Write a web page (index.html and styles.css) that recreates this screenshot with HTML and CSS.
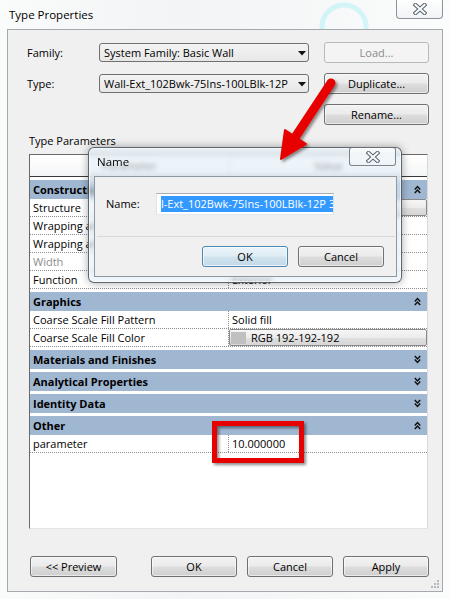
FILE: index.html
```html
<!DOCTYPE html>
<html>
<head>
<meta charset="utf-8">
<title>Type Properties</title>
<link rel="stylesheet" href="styles.css">
</head>
<body>
<svg class="defs" width="0" height="0" aria-hidden="true">
  <defs>
    <symbol id="chev-up" viewBox="0 0 7 9">
      <polyline points="0.8,4.5 3.5,1.5 6.2,4.5" fill="none" stroke="#111" stroke-width="1.5"/>
      <polyline points="0.8,8 3.5,5 6.2,8" fill="none" stroke="#111" stroke-width="1.5"/>
    </symbol>
    <symbol id="chev-down" viewBox="0 0 7 9">
      <polyline points="0.8,1 3.5,4 6.2,1" fill="none" stroke="#111" stroke-width="1.5"/>
      <polyline points="0.8,4.5 3.5,7.5 6.2,4.5" fill="none" stroke="#111" stroke-width="1.5"/>
    </symbol>
    <symbol id="close-x" viewBox="0 0 14 12">
      <path d="M2.5 2 L11.5 10 M11.5 2 L2.5 10" stroke="#5d6873" stroke-width="4.2" stroke-linecap="square" fill="none"/>
      <path d="M2.5 2 L11.5 10 M11.5 2 L2.5 10" stroke="#fbfcfd" stroke-width="2" stroke-linecap="square" fill="none"/>
    </symbol>
    <symbol id="drop" viewBox="0 0 8 5">
      <polygon points="0,0 8,0 4,4.5" fill="#111"/>
    </symbol>
  </defs>
</svg>

<div class="window">
  <div class="titlebar">
    <span class="title">Type Properties</span>
    <div class="close-btn"><svg class="x-icon" width="14" height="12"><use href="#close-x"/></svg></div>
  </div>

  <div class="client">
    <div class="form">
      <span class="lbl">Family:</span>
      <div class="combo"><span class="combo-text">System Family: Basic Wall</span><svg class="drop" width="8" height="5"><use href="#drop"/></svg></div>
      <div class="btn disabled">Load...</div>

      <span class="lbl">Type:</span>
      <div class="combo"><span class="combo-text">Wall-Ext_102Bwk-75Ins-100LBlk-12P</span><svg class="drop" width="8" height="5"><use href="#drop"/></svg></div>
      <div class="btn">Duplicate...</div>

      <div class="btn rename">Rename...</div>
    </div>

    <div class="section">Type Parameters</div>

    <div class="grid">
      <div class="hdr"><div class="hc">Parameter</div><div class="hc">Value</div></div>

      <div class="group"><span>Construction</span><svg class="chev" width="7" height="9"><use href="#chev-up"/></svg></div>
      <div class="row"><div class="c1">Structure</div><div class="c2 has-btn"><div class="cellbtn center">Edit...</div></div></div>
      <div class="row"><div class="c1">Wrapping at Inserts</div><div class="c2">Do not wrap</div></div>
      <div class="row"><div class="c1">Wrapping at Ends</div><div class="c2">None</div></div>
      <div class="row"><div class="c1 ro">Width</div><div class="c2 ro">300.0</div></div>
      <div class="row"><div class="c1">Function</div><div class="c2">Exterior</div></div>

      <div class="group"><span>Graphics</span><svg class="chev" width="7" height="9"><use href="#chev-up"/></svg></div>
      <div class="row"><div class="c1">Coarse Scale Fill Pattern</div><div class="c2">Solid fill</div></div>
      <div class="row"><div class="c1">Coarse Scale Fill Color</div><div class="c2 has-btn"><div class="cellbtn"><span class="swatch"></span><span>RGB 192-192-192</span></div></div></div>

      <div class="group"><span>Materials and Finishes</span><svg class="chev" width="7" height="9"><use href="#chev-down"/></svg></div>
      <div class="group"><span>Analytical Properties</span><svg class="chev" width="7" height="9"><use href="#chev-down"/></svg></div>
      <div class="group"><span>Identity Data</span><svg class="chev" width="7" height="9"><use href="#chev-down"/></svg></div>
      <div class="group"><span>Other</span><svg class="chev" width="7" height="9"><use href="#chev-up"/></svg></div>
      <div class="row"><div class="c1">parameter</div><div class="c2">10.000000</div></div>
    </div>

    <div class="footer">
      <div class="btn preview">&lt;&lt; Preview</div>
      <div class="btn push">OK</div>
      <div class="btn">Cancel</div>
      <div class="btn">Apply</div>
    </div>

    <svg class="grip" width="10" height="10" viewBox="0 0 10 10">
      <g fill="#b8b8b8">
        <rect x="7" y="1" width="2" height="2"/>
        <rect x="4" y="4" width="2" height="2"/><rect x="7" y="4" width="2" height="2"/>
        <rect x="1" y="7" width="2" height="2"/><rect x="4" y="7" width="2" height="2"/><rect x="7" y="7" width="2" height="2"/>
      </g>
    </svg>
  </div>
</div>

<div class="name-dlg">
  <div class="dlg-title">
    <span class="dlg-caption">Name</span>
    <div class="dlg-close"><svg class="x-icon" width="14" height="12"><use href="#close-x"/></svg></div>
  </div>
  <div class="dlg-body">
    <div class="name-row">
      <span class="name-lbl">Name:</span>
      <div class="textbox"><span class="sel">l-Ext_102Bwk-75Ins-100LBlk-12P 3</span></div>
    </div>
    <div class="sep"></div>
    <div class="dlg-buttons">
      <div class="btn default">OK</div>
      <div class="btn">Cancel</div>
    </div>
  </div>
</div>

<svg class="annot" width="450" height="599" viewBox="0 0 450 599">
  <defs>
    <filter id="shadow" x="-20%" y="-20%" width="140%" height="140%">
      <feDropShadow dx="2" dy="2" stdDeviation="1.4" flood-color="#000" flood-opacity="0.45"/>
    </filter>
  </defs>
  <g filter="url(#shadow)">
    <line x1="331" y1="83" x2="296" y2="136" stroke="#e60000" stroke-width="9" stroke-linecap="round"/>
    <polygon points="281,159 306,144 285,130" fill="#e60000" stroke="#e60000" stroke-width="2" stroke-linejoin="round"/>
    <rect x="214.5" y="423.5" width="87" height="37" fill="none" stroke="#e60000" stroke-width="5"/>
  </g>
</svg>
</body>
</html>
```

FILE: styles.css
```css
* { box-sizing: border-box; }
html, body { margin: 0; padding: 0; }

body {
  width: 450px;
  height: 599px;
  overflow: hidden;
  position: relative;
  font-family: "Open Sans", "Noto Sans", sans-serif;
  font-size: 11px;
  color: #000;
  background:
    radial-gradient(circle at 344px 27px, transparent 19px, rgba(140, 236, 246, 0.35) 20px, rgba(140, 236, 246, 0.35) 24px, transparent 25px),
    linear-gradient(90deg, #fafbfb 0%, #f2f4f5 40%, #fbfcfc 100%);
}

.defs { position: absolute; width: 0; height: 0; }

.window {
  height: 599px;
  display: flex;
  flex-direction: column;
}

/* title bar */
.titlebar {
  height: 29px;
  flex: none;
  display: flex;
  justify-content: space-between;
  align-items: flex-start;
  padding: 0 7px 0 9px;
}
.title {
  font-size: 11.5px;
  line-height: 16px;
  margin-top: 7px;
}
.close-btn {
  width: 47px;
  height: 19px;
  border: 1px solid #8a939c;
  border-top: none;
  border-radius: 0 0 4px 4px;
  background: linear-gradient(#fefefe, #f1f3f5);
  display: flex;
  align-items: center;
  justify-content: center;
}
.x-icon { display: block; }

/* client */
.client {
  margin: 0 7px;
  height: 563px;
  flex: none;
  border: 1px solid #a3a9af;
  background: #f0f0f0;
  display: flex;
  flex-direction: column;
  padding: 12px 13px 14px 21px;
  position: relative;
}

.form {
  display: grid;
  grid-template-columns: 57px 210px 105px;
  grid-auto-rows: 21px;
  column-gap: 15px;
  row-gap: 10px;
  margin-left: -2px;
}
.lbl { align-self: center; line-height: 16px; }
.rename { grid-column: 3; }

.combo {
  height: 19px;
  align-self: center;
  border: 1px solid #707070;
  border-radius: 3px;
  background: linear-gradient(#f4f4f4, #e7e7e7);
  display: flex;
  align-items: center;
  justify-content: space-between;
  padding: 0 2px 0 4px;
}
.combo-text { line-height: 15px; white-space: nowrap; overflow: hidden; }
.drop { flex: none; margin-top: 1px; }

.btn {
  height: 21px;
  border: 1px solid #707070;
  border-radius: 3px;
  background: linear-gradient(#f2f2f2 0%, #ebebeb 48%, #dddddd 52%, #cfcfcf 100%);
  box-shadow: inset 0 0 0 1px rgba(255, 255, 255, 0.55);
  display: flex;
  align-items: center;
  justify-content: center;
  line-height: 14px;
  white-space: nowrap;
}
.btn.disabled {
  border-color: #b5babd;
  background: #f4f4f4;
  box-shadow: none;
  color: #8a8a8a;
}

.section {
  line-height: 16px;
  margin-top: 8px;
}

/* property grid */
.grid {
  flex: 1;
  width: 399px;
  margin-top: 5px;
  background: #fff;
  border: 1px solid;
  border-color: #696969 #dadada #e4e4e4 #696969;
  display: flex;
  flex-direction: column;
}
.hdr {
  height: 22px;
  flex: none;
  display: grid;
  grid-template-columns: 199px 1fr;
  background: linear-gradient(#ffffff, #f4f5f6);
  border-bottom: 1px solid #3a3a3a;
}
.hc {
  display: flex;
  align-items: center;
  justify-content: center;
  color: #2a2a2a;
}
.hc + .hc { border-left: 1px solid #d5d5d5; }

.group {
  height: 19px;
  flex: none;
  margin-top: 3px;
  background: #a0b7d2;
  display: flex;
  align-items: center;
  justify-content: space-between;
  padding: 0 6px 0 3px;
  font-weight: 700;
  line-height: 15px;
}
.chev { display: block; }

.row {
  height: 18px;
  flex: none;
  display: grid;
  grid-template-columns: 199px 1fr;
  border-bottom: 1px dotted #8c8c8c;
}
.c1, .c2 {
  padding-left: 3px;
  line-height: 17px;
  white-space: nowrap;
  overflow: hidden;
}
.c1 { border-right: 1px dotted #8c8c8c; }
.ro { color: #8c8c8c; }
.c2.has-btn { padding: 0; }

.cellbtn {
  height: 17px;
  border: 1px solid #8a8a8a;
  border-radius: 2px;
  background: linear-gradient(#f6f6f6 0%, #ececec 50%, #e0e0e0 51%, #d6d6d6 100%);
  display: flex;
  align-items: center;
  gap: 5px;
  padding-left: 1px;
  line-height: 15px;
}
.cellbtn.center { justify-content: center; }
.swatch {
  width: 15px;
  height: 12px;
  background: #c0c0c0;
  flex: none;
}

.footer {
  display: flex;
  gap: 10px;
  margin-top: 27px;
  flex: none;
}
.footer .btn { width: 86px; }
.footer .preview { width: 87px; margin-left: 1px; }
.footer .push { margin-left: auto; }

.grip {
  position: absolute;
  right: 2px;
  bottom: 2px;
}

/* Name dialog */
.name-dlg {
  position: absolute;
  left: 88px;
  top: 147px;
  width: 314px;
  height: 136px;
  border: 1px solid rgba(45, 55, 65, 0.75);
  border-radius: 6px;
  background: rgba(226, 238, 247, 0.55);
  backdrop-filter: blur(2.5px);
  box-shadow: 0 0 9px rgba(0, 0, 0, 0.35), inset 0 0 0 1px rgba(255, 255, 255, 0.6);
  padding: 0 4px 5px 5px;
  display: flex;
  flex-direction: column;
}
.dlg-title {
  height: 28px;
  flex: none;
  display: flex;
  align-items: flex-start;
  justify-content: space-between;
}
.dlg-caption {
  font-size: 11.5px;
  line-height: 16px;
  margin: 6px 0 0 3px;
}
.dlg-close {
  width: 47px;
  height: 19px;
  margin: -1px 1px 0 0;
  border: 1px solid rgba(60, 70, 80, 0.65);
  border-radius: 3px;
  background: linear-gradient(rgba(255, 255, 255, 0.75), rgba(235, 242, 247, 0.6));
  display: flex;
  align-items: center;
  justify-content: center;
}
.dlg-body {
  flex: 1;
  background: #f0f0f0;
  border: 1px solid #8f979f;
  display: flex;
  flex-direction: column;
}
.name-row {
  display: flex;
  align-items: center;
  margin-top: 16px;
  padding-left: 11px;
}
.name-lbl { width: 50px; line-height: 16px; }
.textbox {
  width: 178px;
  height: 22px;
  background: #fff;
  border: 1px solid;
  border-color: #abadb3 #dbdfe6 #e3e9ef #e2e3ea;
  display: flex;
  align-items: center;
  padding-left: 4px;
  overflow: hidden;
}
.sel {
  background: #3399ff;
  color: #fff;
  line-height: 16px;
  white-space: nowrap;
  padding-right: 2px;
}
.sep {
  margin: 21px 1px 0 2px;
  border-top: 1px solid #d8d8d8;
}
.dlg-buttons {
  display: flex;
  justify-content: flex-end;
  gap: 10px;
  margin-top: 9px;
  padding-right: 12px;
}
.dlg-buttons .btn { width: 86px; }
.btn.default {
  border-color: #4b86b4;
  background: linear-gradient(#eaf3f9 0%, #e0edf5 48%, #d0e3ee 52%, #c3d9e7 100%);
  box-shadow: inset 0 0 0 1px rgba(255, 255, 255, 0.7);
}

/* annotation overlay */
.annot {
  position: absolute;
  left: 0;
  top: 0;
  pointer-events: none;
}
```
